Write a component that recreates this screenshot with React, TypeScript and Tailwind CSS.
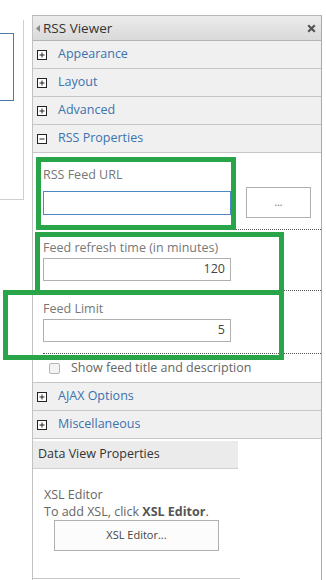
import { ReactNode } from "react";

const font = { fontFamily: '"Open Sans", "Noto Sans", sans-serif' };

function PlusBox({ minus }: { minus?: boolean }) {
  return (
    <svg width="10" height="10" viewBox="0 0 10 10" className="shrink-0">
      <rect x="0.5" y="0.5" width="9" height="9" fill="#fff" stroke="#222" />
      <path d="M2.5 5h5" stroke="#222" />
      {!minus && <path d="M5 2.5v5" stroke="#222" />}
    </svg>
  );
}

function SectionRow({ label, minus }: { label: string; minus?: boolean }) {
  return (
    <div className="flex h-[28px] shrink-0 items-center gap-[11px] border-b border-[#c6c6c6] bg-[#f0f0f0] pl-[4px] text-[12.5px] text-[#3c72ad]">
      <PlusBox minus={minus} />
      <span>{label}</span>
    </div>
  );
}

function Field({
  label,
  value,
  focused,
  extra,
  className,
  inputClass,
}: {
  label: string;
  value: string;
  focused?: boolean;
  extra?: ReactNode;
  className: string;
  inputClass: string;
}) {
  return (
    <div className={`flex items-end border-b border-dotted border-[#555] pr-[10px] ${className}`}>
      <div className="flex w-[188px] flex-col">
        <div className="h-[17px] text-[12.5px] leading-[17px] text-[#777]">{label}</div>
        <div
          className={`flex items-center justify-end border pr-[5px] text-[12.5px] text-[#444] ${inputClass} ${
            focused ? "border-[#4f86c6]" : "border-[#b0b0b0]"
          }`}
        >
          {value}
        </div>
      </div>
      {extra}
    </div>
  );
}

function GreenBox({ className }: { className: string }) {
  return <div className={`pointer-events-none absolute border-[5px] border-[#27a548] ${className}`} />;
}

export default function App() {
  return (
    <div className="relative h-[580px] w-[326px] overflow-hidden bg-white" style={font}>
      <div className="flex">
        {/* left page edge */}
        <div className="w-[32px] shrink-0 pt-[20px]">
          <div className="h-[180px] w-[24px] border-b border-r border-[#cfcfcf] pt-[13px]">
            <div className="h-[68px] w-[14px] border-y border-r border-[#4d7aa6]" />
          </div>
        </div>

        {/* tool pane */}
        <div className="mt-[15px] flex h-[565px] w-[290px] flex-col border-x border-t border-l-[#c2c2c2] border-r-[#a9a9a9] border-t-[#b8b8b8]">
          <div className="flex h-[25px] shrink-0 items-center border-b border-[#b5b5b5] bg-gradient-to-b from-[#ececec] to-[#d9d9d9] pl-[3px] pr-[5px] text-[13.5px] text-[#333]">
            <svg width="4" height="7" viewBox="0 0 4 7" className="mt-[1px]">
              <path d="M4 0v7L0 3.5z" fill="#888" />
            </svg>
            <span className="ml-[3px]">RSS Viewer</span>
            <svg width="9" height="9" viewBox="0 0 9 9" className="ml-auto">
              <path d="M1.2 1.2l6.6 6.6M7.8 1.2l-6.6 6.6" stroke="#555" strokeWidth="2.2" />
            </svg>
          </div>
          <SectionRow label="Appearance" />
          <SectionRow label="Layout" />
          <SectionRow label="Advanced" />
          <SectionRow label="RSS Properties" minus />

          <div className="flex shrink-0 flex-col border-b border-[#c6c6c6] pl-[10px]">
            <Field
              className="pb-[14px] pt-[13px]"
              inputClass="mt-[8px] h-[24px]"
              label="RSS Feed URL"
              value=""
              focused
              extra={
                <div className="mb-[-3px] ml-auto flex h-[31px] w-[65px] items-center justify-center border border-[#b0b0b0] text-[10px] text-[#666]">
                  ...
                </div>
              }
            />
            <Field
              className="pb-[9px] pt-[9px]"
              inputClass="mt-[2px] h-[23px]"
              label="Feed refresh time (in minutes)"
              value="120"
            />
            <Field
              className="pb-[11px] pt-[9px]"
              inputClass="mt-[2px] h-[23px]"
              label="Feed Limit"
              value="5"
            />
            <div className="flex h-[28px] items-center gap-[11px] pl-[6px] text-[12.5px] text-[#666]">
              <div className="h-[11px] w-[11px] rounded-[2px] border border-[#b5b5b5] bg-[#f3f3f3]" />
              <span>Show feed title and description</span>
            </div>
          </div>

          <SectionRow label="AJAX Options" />
          <SectionRow label="Miscellaneous" />

          <div className="mt-[2px] flex h-[28px] w-[205px] shrink-0 items-center border-b border-[#d0d0d0] bg-[#ebebeb] pl-[5px] text-[12.5px] text-[#333]">
            Data View Properties
          </div>
          <div className="flex w-[207px] flex-1 flex-col pl-[11px] pt-[17px] text-[12.5px] text-[#666]">
            <div className="leading-[17px]">XSL Editor</div>
            <div className="leading-[17px]">
              To add XSL, click <b className="font-bold text-[#555]">XSL Editor</b>.
            </div>
            <div className="ml-[10px] flex h-[31px] w-[165px] items-center justify-center border border-[#b0b0b0] bg-[#fcfcfc] text-[11px] text-[#444]">
              XSL Editor...
            </div>
            <div className="mt-auto mb-[1px] ml-[-11px] border-b border-[#c6c6c6]" />
          </div>
        </div>
      </div>

      {/* green annotation boxes */}
      <GreenBox className="left-[36px] top-[157px] h-[73px] w-[200px]" />
      <GreenBox className="left-[35px] top-[232px] h-[63px] w-[249px]" />
      <GreenBox className="left-[3px] top-[290px] h-[70px] w-[281px]" />
    </div>
  );
}
